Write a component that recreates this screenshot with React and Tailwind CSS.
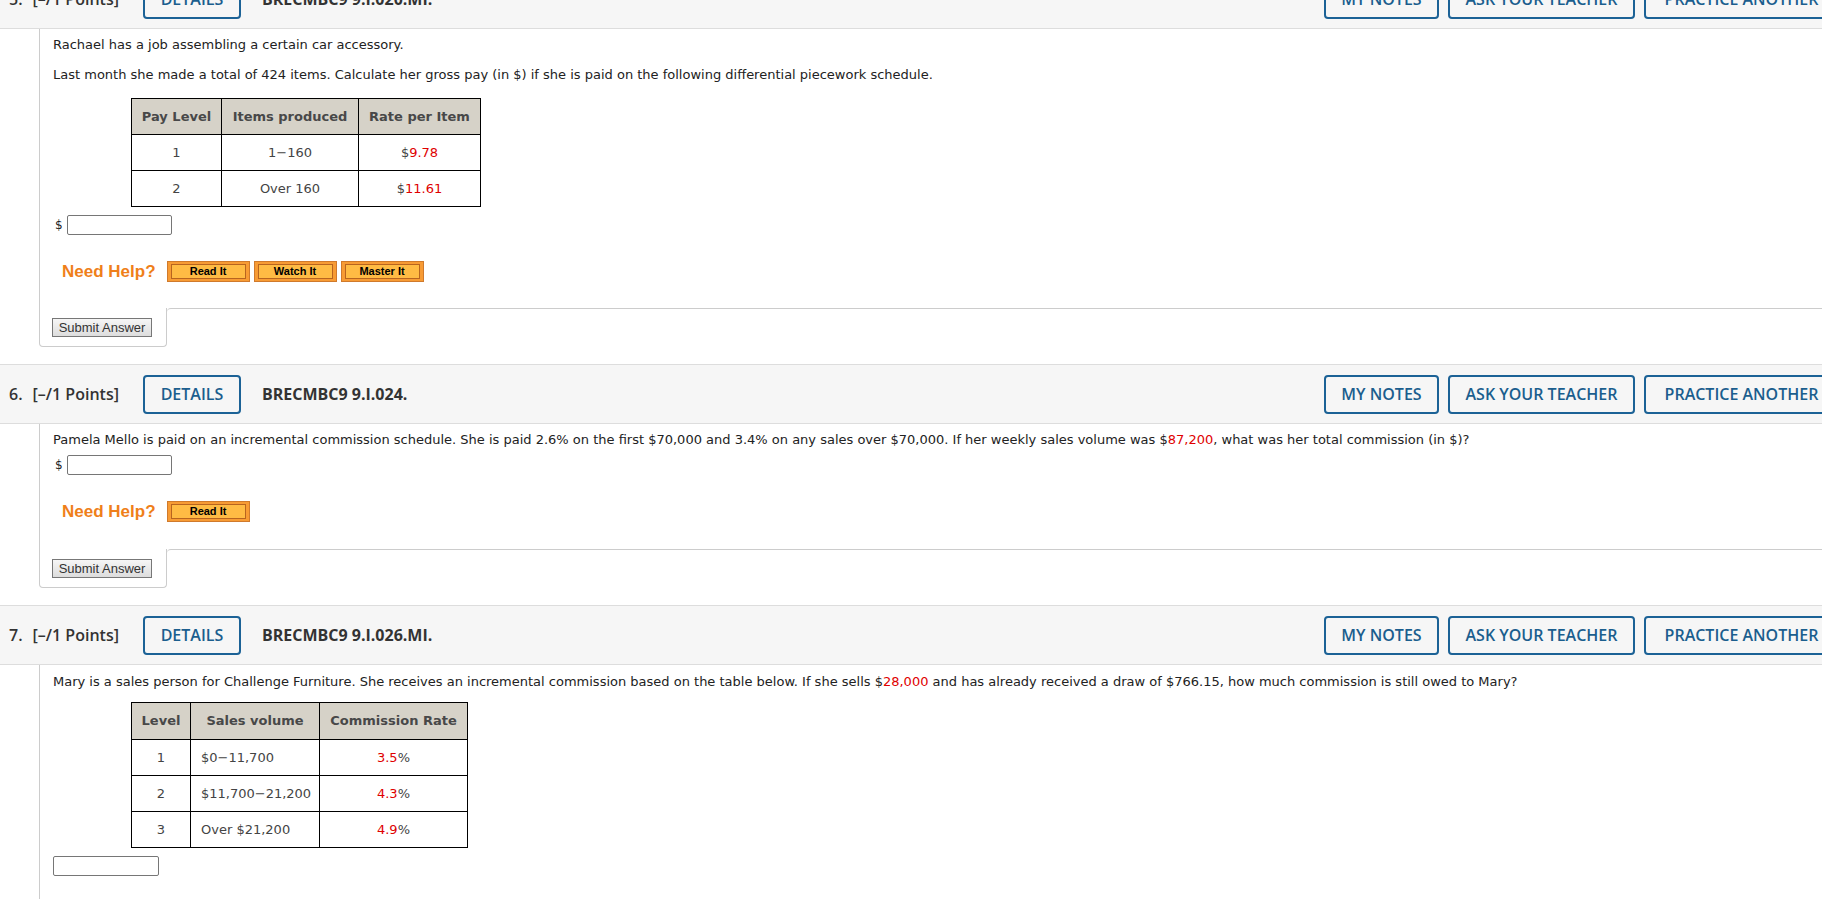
import React from "react";

const bodyFont = "font-['DejaVu_Sans',Verdana,sans-serif]";
const headFont = "font-['Open_Sans','Noto_Sans',sans-serif]";
const arial = "font-['Liberation_Sans',Arial,sans-serif]";

function Red({ children }) {
  return <span className="text-[#e00000]">{children}</span>;
}

function QuestionHeader({ num, code }) {
  return (
    <div className={`flex h-[60px] items-center border-y border-[#dddddd] bg-[#f6f6f6] pl-[9px] text-[16px] text-[#333] ${headFont}`}>
      <span className="font-semibold">{num}.</span>
      <span className="ml-[10px] font-semibold">[–/1 Points]</span>
      <button className="ml-[24px] flex h-[39px] w-[98px] items-center justify-center rounded-[4px] border-2 border-[#1c6296] font-semibold text-[#1b5e8e]">
        DETAILS
      </button>
      <span className="ml-[21px] font-bold">{code}</span>
      <div className="ml-auto mr-[-17px] flex gap-[9px]">
        <button className="flex h-[39px] w-[115px] items-center justify-center rounded-[4px] border-2 border-[#1c6296] font-semibold text-[#1b5e8e]">
          MY NOTES
        </button>
        <button className="flex h-[39px] w-[187px] items-center justify-center rounded-[4px] border-2 border-[#1c6296] font-semibold text-[#1b5e8e]">
          ASK YOUR TEACHER
        </button>
        <button className="flex h-[39px] w-[195px] items-center justify-center rounded-[4px] border-2 border-[#1c6296] font-semibold text-[#1b5e8e]">
          PRACTICE ANOTHER
        </button>
      </div>
    </div>
  );
}

function HelpButton({ label }) {
  return (
    <span className="flex h-[21px] w-[83px] border border-[#d07a2c] bg-[#f79b34] px-[3px] py-[2px]">
      <span className={`flex flex-1 items-center justify-center border border-[#b8641f] bg-[#ffbb44] text-[11px] leading-none font-bold text-black ${arial}`}>
        {label}
      </span>
    </span>
  );
}

function NeedHelp({ buttons, className = "" }) {
  return (
    <div className={`flex items-center pl-[9px] ${className}`}>
      <span className={`text-[17px] font-bold text-[#ef7f1a] ${arial}`}>Need Help?</span>
      <div className="ml-[11px] flex gap-[4px]">
        {buttons.map((b) => (
          <HelpButton key={b} label={b} />
        ))}
      </div>
    </div>
  );
}

function SubmitRow({ className = "" }) {
  return (
    <div className={`flex ${className}`}>
      <div className="h-[39px] w-[128px] rounded-b-[4px] border-x border-b border-[#cccccc] pl-[12px] pt-[10px]">
        <button className={`flex h-[19px] w-[100px] items-center justify-center border border-[#777] bg-gradient-to-b from-[#f6f6f6] to-[#dddddd] text-[13px] leading-none text-[#333] ${arial}`}>
          Submit Answer
        </button>
      </div>
      <div className="flex-1 rounded-tl-[4px] border-t border-[#cccccc]" />
    </div>
  );
}

function DollarInput({ className = "" }) {
  return (
    <div className={`flex items-center ${className}`}>
      <span className="ml-[2px] w-[12px] text-[12px] text-[#222]">$</span>
      <input className="h-[20px] w-[105px] rounded-[2px] border border-[#767676] bg-white" />
    </div>
  );
}

const th = "border border-black bg-[#d6d2c8] font-bold text-[#484848]";
const td = "border border-black text-[#444]";

export default function App() {
  return (
    <div className={`h-[899px] w-full overflow-hidden bg-white ${bodyFont}`}>
      <div className="-mt-[31px]">
        {/* Question 5 */}
        <QuestionHeader num={5} code="BRECMBC9 9.I.020.MI." />
        <div className="ml-[39px]">
          <div className="border-l border-[#cccccc] pl-[13px] pt-[8px] text-[13px] leading-[16px] text-[#222]">
            <p>Rachael has a job assembling a certain car accessory.</p>
            <p className="mt-[14px]">
              Last month she made a total of 424 items. Calculate her gross pay (in $) if she is paid on the
              following differential piecework schedule.
            </p>
            <table className="ml-[78px] mt-[15px] border-collapse text-center text-[13px]">
              <thead>
                <tr className="h-[36px]">
                  <th className={`${th} w-[90px]`}>Pay Level</th>
                  <th className={`${th} w-[137px]`}>Items produced</th>
                  <th className={`${th} w-[122px]`}>Rate per Item</th>
                </tr>
              </thead>
              <tbody>
                <tr className="h-[36px]">
                  <td className={td}>1</td>
                  <td className={td}>1−160</td>
                  <td className={td}>
                    $<Red>9.78</Red>
                  </td>
                </tr>
                <tr className="h-[36px]">
                  <td className={td}>2</td>
                  <td className={td}>Over 160</td>
                  <td className={td}>
                    $<Red>11.61</Red>
                  </td>
                </tr>
              </tbody>
            </table>
            <DollarInput className="mt-[8px]" />
            <NeedHelp className="mt-[26px]" buttons={["Read It", "Watch It", "Master It"]} />
            <div className="h-[26px]" />
          </div>
          <SubmitRow />
        </div>

        {/* Question 6 */}
        <div className="mt-[17px]">
          <QuestionHeader num={6} code="BRECMBC9 9.I.024." />
          <div className="ml-[39px]">
            <div className="border-l border-[#cccccc] pl-[13px] pt-[8px] text-[13px] leading-[16px] text-[#222]">
              <p>
                Pamela Mello is paid on an incremental commission schedule. She is paid 2.6% on the first $70,000
                and 3.4% on any sales over $70,000. If her weekly sales volume was $<Red>87,200</Red>, what was her
                total commission (in $)?
              </p>
              <DollarInput className="mt-[7px]" />
              <NeedHelp className="mt-[26px]" buttons={["Read It"]} />
              <div className="h-[27px]" />
            </div>
            <SubmitRow />
          </div>
        </div>

        {/* Question 7 */}
        <div className="mt-[17px]">
          <QuestionHeader num={7} code="BRECMBC9 9.I.026.MI." />
          <div className="ml-[39px]">
            <div className="border-l border-[#cccccc] pb-[60px] pl-[13px] pt-[9px] text-[13px] leading-[16px] text-[#222]">
              <p>
                Mary is a sales person for Challenge Furniture. She receives an incremental commission based on the
                table below. If she sells $<Red>28,000</Red> and has already received a draw of $766.15, how much
                commission is still owed to Mary?
              </p>
              <table className="ml-[78px] mt-[12px] border-collapse text-[13px]">
                <thead>
                  <tr className="h-[37px]">
                    <th className={`${th} w-[59px]`}>Level</th>
                    <th className={`${th} w-[129px]`}>Sales volume</th>
                    <th className={`${th} w-[148px]`}>Commission Rate</th>
                  </tr>
                </thead>
                <tbody>
                  {[
                    ["1", "$0−11,700", "3.5"],
                    ["2", "$11,700−21,200", "4.3"],
                    ["3", "Over $21,200", "4.9"],
                  ].map(([lvl, vol, rate]) => (
                    <tr key={lvl} className="h-[36px]">
                      <td className={`${td} text-center`}>{lvl}</td>
                      <td className={`${td} pl-[10px] text-left`}>{vol}</td>
                      <td className={`${td} text-center`}>
                        <Red>{rate}</Red>%
                      </td>
                    </tr>
                  ))}
                </tbody>
              </table>
              <input className="mt-[8px] block h-[20px] w-[106px] rounded-[2px] border border-[#767676] bg-white" />
              <NeedHelp className="mt-[26px]" buttons={["Read It", "Master It"]} />
            </div>
          </div>
        </div>
      </div>
    </div>
  );
}
